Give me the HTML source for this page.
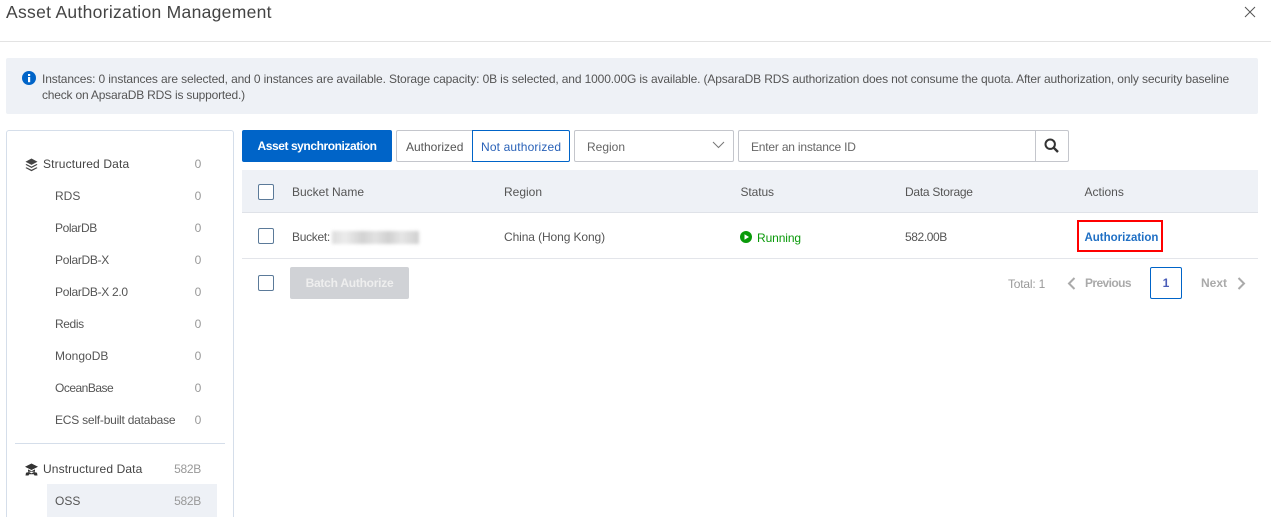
<!DOCTYPE html>
<html><head><meta charset="utf-8"><style>
html,body{margin:0;padding:0;background:#fff;width:1271px;height:517px;overflow:hidden}
body{position:relative;font-family:"Liberation Sans",sans-serif;font-size:12px;color:#555}
#w{left:0;top:0;width:1271px;height:517px;overflow:hidden;background:#fff}
div{position:absolute;box-sizing:border-box}
.t{white-space:nowrap;line-height:16px;height:16px}
.g{color:#999}
.cb{width:16px;height:16px;border:1px solid #5b7a99;border-radius:2px;background:#fff;left:258px}
.n{color:#999;white-space:nowrap;line-height:16px;height:16px;right:1070px;letter-spacing:-.3px}
.k{left:55px}
</style></head><body><div id="w">
<div class="t" style="left:6px;top:2px;font-size:17.5px;line-height:20px;height:20px;color:#444;letter-spacing:.3px">Asset Authorization Management</div>
<svg style="position:absolute;left:1244px;top:6px" width="12" height="12"><path d="M1 1L11 11M11 1L1 11" stroke="#555" stroke-width="1" fill="none"/></svg>
<div style="left:0;top:41px;width:1271px;height:1px;background:#e3e3e3"></div>

<div style="left:6px;top:58px;width:1252px;height:56px;background:#eef1f6;border-radius:2px"></div>
<svg style="position:absolute;left:22px;top:71px" width="14" height="14" viewBox="0 0 14 14"><circle cx="7" cy="7" r="7" fill="#0064c8"/><rect x="6" y="6" width="2.2" height="5.2" fill="#fff"/><rect x="6" y="3" width="2.2" height="2" fill="#fff"/></svg>
<div class="t" style="left:42px;top:71px;letter-spacing:-.136px">Instances: 0 instances are selected, and 0 instances are available. Storage capacity: 0B is selected, and 1000.00G is available. (ApsaraDB RDS authorization does not consume the quota. After authorization, only security baseline</div>
<div class="t" style="left:42px;top:87px;letter-spacing:-.2px">check on ApsaraDB RDS is supported.)</div>

<div style="left:6px;top:130px;width:228px;height:400px;border:1px solid #d5deea;border-radius:3px"></div>
<svg style="position:absolute;left:25px;top:158px" width="13" height="14" viewBox="0 0 13 14"><path d="M6.5 .5L12.5 3.7L6.5 6.9L.5 3.7Z" fill="#444"/><path d="M1.5 6L6.5 8.6L11.5 6L12.5 6.8L6.5 10L.5 6.8Z" fill="#444"/><path d="M1.5 9.2L6.5 11.8L11.5 9.2L12.5 10L6.5 13.2L.5 10Z" fill="#444"/></svg>
<div class="t" style="left:43px;top:156px;color:#444;letter-spacing:.15px">Structured Data</div><div class="n" style="top:156px">0</div>
<div class="t k" style="top:188px">RDS</div><div class="n" style="top:188px">0</div>
<div class="t k" style="top:220px;letter-spacing:-.4px">PolarDB</div><div class="n" style="top:220px">0</div>
<div class="t k" style="top:252px;letter-spacing:-.3px">PolarDB-X</div><div class="n" style="top:252px">0</div>
<div class="t k" style="top:284px;letter-spacing:-.3px">PolarDB-X 2.0</div><div class="n" style="top:284px">0</div>
<div class="t k" style="top:316px;letter-spacing:-.4px">Redis</div><div class="n" style="top:316px">0</div>
<div class="t k" style="top:348px">MongoDB</div><div class="n" style="top:348px">0</div>
<div class="t k" style="top:380px;letter-spacing:-.5px">OceanBase</div><div class="n" style="top:380px">0</div>
<div class="t k" style="top:412px;letter-spacing:-.22px">ECS self-built database</div><div class="n" style="top:412px">0</div>
<div style="left:15px;top:443px;width:210px;height:1px;background:#d5deea"></div>
<svg style="position:absolute;left:25px;top:463px" width="13" height="13" viewBox="0 0 13 13"><path d="M6.5 .5L13 3.8L6.5 7L0 3.8Z" fill="#333"/><path d="M3 6.4L6.5 8.2L10 6.4V8.8H3Z" fill="#333"/><path d="M1 9.8L4 9L6.5 10.4L9 9L12 9.8L12.5 12.5H9.5L8.8 11.2H4.2L3.5 12.5H.5Z" fill="#333"/></svg>
<div class="t" style="left:43px;top:461px;color:#444;letter-spacing:.12px">Unstructured Data</div><div class="n" style="top:461px">582B</div>
<div style="left:47px;top:484px;width:170px;height:33px;background:#eef1f6"></div>
<div class="t k" style="top:493px">OSS</div><div class="n" style="top:493px">582B</div>

<div style="left:242px;top:130px;width:150px;height:32px;background:#0064c8;border-radius:2px"></div>
<div class="t" style="left:242px;top:138px;width:150px;text-align:center;color:#fff;font-weight:bold;letter-spacing:-.43px">Asset synchronization</div>

<div style="left:396px;top:130px;width:77px;height:32px;border:1px solid #c4c6cc;border-right:0;border-radius:2px 0 0 2px"></div>
<div class="t" style="left:406px;top:139px">Authorized</div>
<div style="left:472px;top:130px;width:98px;height:32px;border:1px solid #0064c8;border-radius:0 2px 2px 0"></div>
<div class="t" style="left:481px;top:139px;color:#2a62b8;letter-spacing:.15px">Not authorized</div>

<div style="left:574px;top:130px;width:160px;height:32px;border:1px solid #c4c6cc;border-radius:2px"></div>
<div class="t" style="left:587px;top:139px;color:#666">Region</div>
<svg style="position:absolute;left:712px;top:141px" width="13" height="8"><path d="M1 1L6.5 6.5L12 1" stroke="#777" stroke-width="1" fill="none"/></svg>

<div style="left:738px;top:130px;width:331px;height:32px;border:1px solid #c4c6cc;border-radius:2px"></div>
<div style="left:1035px;top:130px;width:1px;height:32px;background:#c4c6cc"></div>
<div class="t" style="left:751px;top:139px;color:#666;letter-spacing:-.2px">Enter an instance ID</div>
<svg style="position:absolute;left:1044px;top:138px" width="15" height="15" viewBox="0 0 15 15"><circle cx="6.2" cy="6.2" r="4.7" stroke="#333" stroke-width="2" fill="none"/><path d="M9.8 9.8L14 14" stroke="#333" stroke-width="2.4" fill="none"/></svg>

<div style="left:242px;top:170px;width:1016px;height:43px;background:#eef1f6;border-bottom:1px solid #dfe2e8"></div>
<div class="cb" style="top:184px"></div>
<div class="t" style="left:292px;top:184px">Bucket Name</div>
<div class="t" style="left:504px;top:184px">Region</div>
<div class="t" style="left:740.5px;top:184px;letter-spacing:-.1px">Status</div>
<div class="t" style="left:905px;top:184px;letter-spacing:-.25px">Data Storage</div>
<div class="t" style="left:1084.5px;top:184px">Actions</div>

<div class="cb" style="top:228px"></div>
<div class="t" style="left:292px;top:229px;letter-spacing:-.3px">Bucket:</div>
<div style="left:332px;top:231px;width:87px;height:13px;filter:blur(1.5px);background:linear-gradient(90deg,#ddd,#ececec 15%,#d2d2d2 35%,#e2e2e2 50%,#d0d0d0 65%,#e6e6e6 80%,#cfcfcf)"></div>
<div class="t" style="left:504px;top:229px;letter-spacing:-.1px">China (Hong Kong)</div>
<svg style="position:absolute;left:740px;top:231px" width="12" height="12" viewBox="0 0 12 12"><circle cx="6" cy="6" r="6" fill="#0a9a0a"/><path d="M4.5 3.2L9 6L4.5 8.8Z" fill="#fff"/></svg>
<div class="t" style="left:757px;top:230px;color:#0a9a0a;letter-spacing:-.1px">Running</div>
<div class="t" style="left:905px;top:229px;letter-spacing:-.4px">582.00B</div>
<div style="left:1077px;top:220px;width:86px;height:32px;border:2px solid #f00"></div>
<div class="t" style="left:1084.5px;top:229.5px;color:#1f6fc4;font-weight:bold;font-size:11.5px;letter-spacing:-.02px">Authorization</div>
<div style="left:242px;top:258px;width:1016px;height:1px;background:#e3e5ea"></div>

<div class="cb" style="top:275px"></div>
<div style="left:290px;top:267px;width:119px;height:32px;background:#d0d2d6;border-radius:2px"></div>
<div class="t" style="left:290px;top:275px;width:119px;text-align:center;color:#eee;font-weight:bold;letter-spacing:-.25px">Batch Authorize</div>

<div class="t g" style="left:1008px;top:276px;letter-spacing:-.2px">Total: 1</div>
<svg style="position:absolute;left:1067px;top:277px" width="9" height="13"><path d="M7.5 1L2 6.5L7.5 12" stroke="#aaa" stroke-width="2" fill="none"/></svg>
<div class="t g" style="left:1085px;top:275px;font-weight:bold;color:#aaa;letter-spacing:-.6px">Previous</div>
<div style="left:1150px;top:267px;width:32px;height:32px;border:1px solid #0064c8;border-radius:2px"></div>
<div class="t" style="left:1150px;top:275px;width:32px;text-align:center;color:#4a5cb8;font-weight:bold">1</div>
<div class="t g" style="left:1201px;top:275px;font-weight:bold;color:#aaa">Next</div>
<svg style="position:absolute;left:1237px;top:277px" width="9" height="13"><path d="M1.5 1L7 6.5L1.5 12" stroke="#aaa" stroke-width="2" fill="none"/></svg>
</div></body></html>
